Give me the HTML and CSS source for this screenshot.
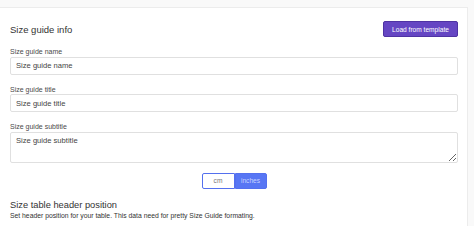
FILE: index.html
```html
<!DOCTYPE html>
<html lang="en">
<head>
  <meta charset="UTF-8" />
  <title>Size guide</title>
  <link rel="stylesheet" href="styles.css">
</head>
<body>
  <div class="page">
    <div class="card">
      <div class="card-head">
        <h2>Size guide info</h2>
        <button class="btn-template">Load from template</button>
      </div>

      <div class="field">
        <label>Size guide name</label>
        <input type="text" value="Size guide name">
      </div>
      <div class="field">
        <label>Size guide title</label>
        <input type="text" value="Size guide title">
      </div>
      <div class="field">
        <label>Size guide subtitle</label>
        <textarea>Size guide subtitle</textarea>
      </div>

      <div class="units">
        <button class="unit">cm</button>
        <button class="unit active">inches</button>
      </div>

      <h2 class="section">Size table header position</h2>
      <p class="hint">Set header position for your table. This data need for pretty Size Guide formating.</p>
    </div>
  </div>
</body>
</html>
```

FILE: styles.css
```css
* {
  box-sizing: border-box;
  margin: 0;
  padding: 0;
  font-family: "Liberation Sans", Arial, sans-serif;
}
body {
  background: #f9f9f9;
  color: #333;
}
.page {
  padding: 7px 6px 0 0;
}
.card {
  background: #fff;
  border: 1px solid #ececec;
  border-left: none;
  border-bottom: none;
  padding: 13px 9px 0 10px;
  height: 219px;
}
.card-head {
  display: flex;
  align-items: center;
  justify-content: space-between;
  height: 16px;
  margin-bottom: 10px;
}
h2 {
  font-size: 9.5px;
  font-weight: normal;
  color: #333;
}
.btn-template {
  width: 75px;
  height: 16px;
  background: #6546c3;
  border: 1px solid #4f33a3;
  border-radius: 2px;
  color: #fff;
  font-size: 6.6px;
}
.field {
  margin-bottom: 10px;
}
.field label {
  display: block;
  font-size: 7px;
  line-height: 9.5px;
  color: #4a4a4a;
}
.field input, .field textarea {
  display: block;
  width: 100%;
  border: 1px solid #e0e0e0;
  border-radius: 2px;
  padding: 0 5px;
  font-size: 7.6px;
  color: #444;
  background: #fff;
}
.field input {
  height: 18px;
}
.field textarea {
  height: 31px;
  padding-top: 3px;
}
.units {
  display: flex;
  justify-content: center;
}
.unit {
  width: 33px;
  height: 16px;
  font-size: 6.6px;
  background: #fff;
  color: #777;
  border: 1px solid #5470ee;
  border-radius: 2px 0 0 2px;
}
.unit.active {
  width: 32px;
  background: #5776f4;
  color: #c9d2ff;
  border-radius: 0 2px 2px 0;
}
.section {
  font-size: 9.3px;
  margin-top: 11px;
  line-height: 11px;
}
.hint {
  font-size: 6.8px;
  line-height: 9px;
  color: #333;
}
```
